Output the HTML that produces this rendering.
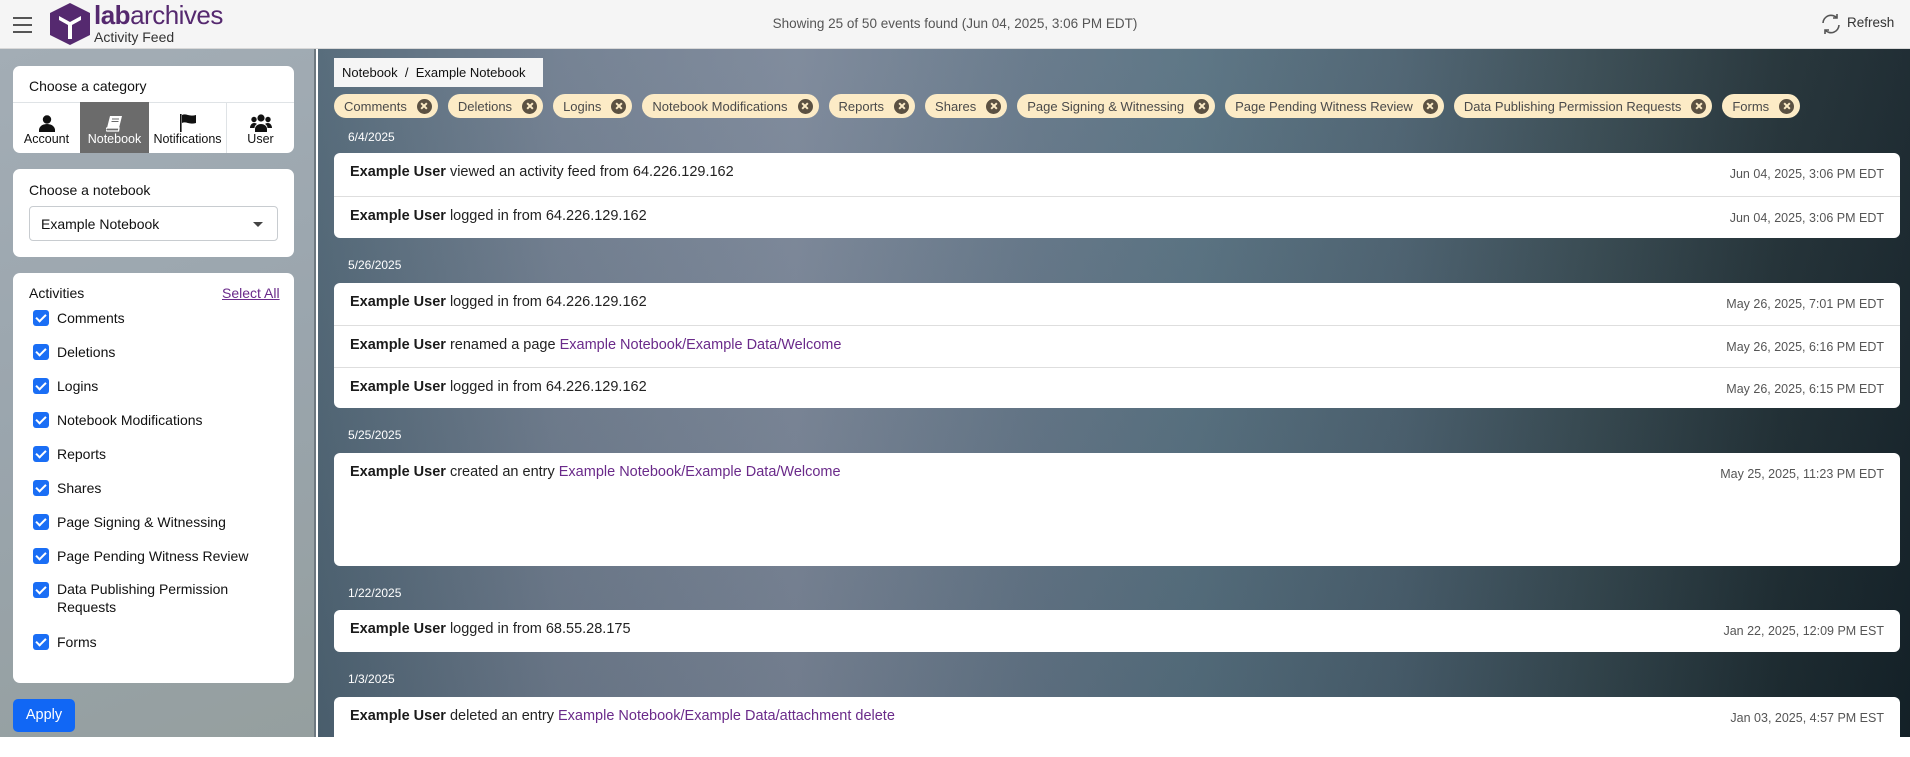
<!DOCTYPE html>
<html><head><meta charset="utf-8"><style>
*{box-sizing:border-box;margin:0;padding:0}
body{width:1910px;height:737px;overflow:hidden;font-family:"Liberation Sans",Arial,sans-serif;color:#222;position:relative;background:#fff}
.hdr{position:absolute;left:0;top:0;width:1910px;height:49px;background:#f5f5f5;border-bottom:1px solid #d8d8d8}
.side{position:absolute;left:0;top:49px;width:316px;height:688px;background:linear-gradient(160deg,#a3adb5 0%,#9aa5ad 50%,#959f9f 100%);border-right:2px solid #6d7880}
.main{position:absolute;left:318px;top:49px;width:1592px;height:688px;background:linear-gradient(90deg,#4f6575 0%,#6e7c8e 15%,#7a8698 30%,#627587 45%,#567080 55%,#495f6e 68%,#34474f 80%,#1e2d33 92%,#15232a 100%)}
.main:before{content:"";position:absolute;inset:0;background:linear-gradient(180deg,rgba(255,255,255,0.05),rgba(0,0,0,0.08))}
.card{position:absolute;background:#fff;border-radius:7px}
.tab{position:absolute;top:102px;height:51px;text-align:center;font-size:12.5px;color:#111}
.tab .ic{height:22px;margin-top:8px;display:flex;justify-content:center;align-items:flex-end}
.cb{position:absolute;left:33px;width:16px;height:16px;background:#1a6ef5;border-radius:3px}
.cb:after{content:"";position:absolute;left:5px;top:2px;width:4px;height:8px;border:solid #fff;border-width:0 2px 2px 0;transform:rotate(45deg)}
.lbl{position:absolute;left:57px;font-size:14px;color:#111}
.chips{position:absolute;left:334px;top:94px;display:flex;gap:10px}
.chip{height:24px;border-radius:12px;background:#fcebc6;display:flex;align-items:center;padding:0 6px 0 10px;font-size:13px;color:#4a4a4a;white-space:nowrap}
.x{width:15px;height:15px;border-radius:50%;background:#5b5142;margin-left:10px;position:relative}
.x:before,.x:after{content:"";position:absolute;left:6.5px;top:3.5px;width:2px;height:8px;background:#fcebc6;transform:rotate(45deg)}
.x:after{transform:rotate(-45deg)}
.date{position:absolute;left:348px;font-size:12px;color:#fff}
.ev{position:absolute;left:334px;width:1566px;background:#fff;border-radius:6px;overflow:hidden}
.row{position:relative;height:42px;border-top:1px solid #dedede;font-size:14.5px;color:#222;padding:11px 0 0 16px}
.row:first-child{border-top:none}
.row b{font-weight:bold;color:#1a1a1a}
.row .t{position:absolute;right:16px;top:14px;font-size:12.5px;color:#555}
.lk{color:#6a2a8a}
</style></head><body>
<div class="hdr">
 <div style="position:absolute;left:13px;top:17px;width:19px">
  <div style="height:2px;background:#555;margin-bottom:5px"></div><div style="height:2px;background:#555;margin-bottom:5px"></div><div style="height:2px;background:#555"></div></div>
 <svg style="position:absolute;left:50px;top:3px" width="40" height="42" viewBox="0 0 40 42">
  <polygon points="20,0 40,10 40,32 20,42 0,32 0,10" fill="#55296f"/>
  <polygon points="9,13 20,19 31,13 31,17 22,22 22,36 18,36 18,22 9,17" fill="#fff"/>
 </svg>
 <div style="position:absolute;left:94px;top:0px;font-size:26px;color:#55296f;letter-spacing:-0.5px"><b>lab</b>archives</div>
 <div style="position:absolute;left:94px;top:29px;font-size:14px;color:#333">Activity Feed</div>
 <div style="position:absolute;left:0;width:1910px;top:16px;text-align:center;font-size:13.5px;color:#555">Showing 25 of 50 events found (Jun 04, 2025, 3:06 PM EDT)</div>
 <svg style="position:absolute;left:1820px;top:13px" width="22" height="22" viewBox="0 0 22 22" fill="none" stroke="#555" stroke-width="1.6"><path d="M3 10a8 8 0 0 1 14-5"/><path d="M17 1v4h-4"/><path d="M19 12a8 8 0 0 1-14 5"/><path d="M5 21v-4h4"/></svg>
 <div style="position:absolute;left:1847px;top:15px;font-size:13.5px;color:#333">Refresh</div>
</div>
<div class="side">
</div>
<div class="card" style="left:13px;top:66px;width:281px;height:87px"></div>
<div style="position:absolute;left:29px;top:78px;font-size:14px;color:#111">Choose a category</div>
<div style="position:absolute;left:13px;top:102px;width:281px;height:1px;background:#dfe3e6"></div>
<div class="tab" style="left:13px;width:67px"><div class="ic"><svg width="16" height="17" viewBox="0 0 16 17"><circle cx="8" cy="4.5" r="4.2" fill="#111"/><path d="M0 17v-2c0-3 3-6 8-6s8 3 8 6v2z" fill="#111"/></svg></div>Account</div>
<div class="tab" style="left:80px;width:69px;background:#6b6b6b;color:#fff"><div class="ic"><svg width="17" height="17" viewBox="0 0 17 17"><path d="M4 1h12l-3 12H1z" fill="#fff"/><path d="M1 13h12l-.5 3H1.5a1.5 1.5 0 0 1-.5-3z" fill="none" stroke="#fff" stroke-width="1.3"/><path d="M6 4h7M5.5 6.5h7" stroke="#6b6b6b" stroke-width="1"/></svg></div>Notebook</div>
<div class="tab" style="left:149px;width:78px;border-right:1px solid #dfe3e6"><div class="ic"><svg width="18" height="18" viewBox="0 0 18 18"><rect x="1" y="0" width="1.6" height="18" fill="#111"/><path d="M3 1c4-2 7 2 14 0v8c-7 2-10-2-14 0z" fill="#111"/></svg></div>Notifications</div>
<div class="tab" style="left:227px;width:67px"><div class="ic"><svg width="22" height="18" viewBox="0 0 22 18"><circle cx="11" cy="4" r="3.6" fill="#111"/><circle cx="4" cy="5.5" r="2.7" fill="#111"/><circle cx="18" cy="5.5" r="2.7" fill="#111"/><path d="M5 18v-3c0-3 3-5 6-5s6 2 6 5v3z" fill="#111"/><path d="M0 14c0-3 2-5 4-5s3 1 3 1c-2 1-2.5 3-2.5 4z" fill="#111"/><path d="M22 14c0-3-2-5-4-5s-3 1-3 1c2 1 2.5 3 2.5 4z" fill="#111"/></svg></div>User</div>

<div class="card" style="left:13px;top:169px;width:281px;height:88px"></div>
<div style="position:absolute;left:29px;top:182px;font-size:14px;color:#111">Choose a notebook</div>
<div style="position:absolute;left:29px;top:206px;width:249px;height:35px;border:1px solid #c8ccd0;border-radius:4px;background:#fff;font-size:14px;padding:9px 0 0 11px;color:#111">Example Notebook
 <div style="position:absolute;right:14px;top:15px;width:0;height:0;border-left:5px solid transparent;border-right:5px solid transparent;border-top:5px solid #444"></div></div>

<div class="card" style="left:13px;top:273px;width:281px;height:410px"></div>
<div style="position:absolute;left:29px;top:285px;font-size:14px;color:#111">Activities</div>
<div style="position:absolute;left:222px;top:285px;font-size:14px;color:#6a2a8a;text-decoration:underline">Select All</div>
<div class="cb" style="top:310px"></div><div class="lbl" style="top:310px">Comments</div>
<div class="cb" style="top:344px"></div><div class="lbl" style="top:344px">Deletions</div>
<div class="cb" style="top:378px"></div><div class="lbl" style="top:378px">Logins</div>
<div class="cb" style="top:412px"></div><div class="lbl" style="top:412px">Notebook Modifications</div>
<div class="cb" style="top:446px"></div><div class="lbl" style="top:446px">Reports</div>
<div class="cb" style="top:480px"></div><div class="lbl" style="top:480px">Shares</div>
<div class="cb" style="top:514px"></div><div class="lbl" style="top:514px">Page Signing &amp; Witnessing</div>
<div class="cb" style="top:548px"></div><div class="lbl" style="top:548px">Page Pending Witness Review</div>
<div class="cb" style="top:582px"></div><div class="lbl" style="line-height:18px;top:580px">Data Publishing Permission<br>Requests</div>
<div class="cb" style="top:634px"></div><div class="lbl" style="top:634px">Forms</div>
<div style="position:absolute;left:13px;top:699px;width:62px;height:33px;background:#1167f5;border-radius:5px;color:#fff;font-size:14.5px;text-align:center;line-height:33px">Apply</div>

<div class="main"></div>
<div style="position:absolute;left:334px;top:58px;width:209px;height:29px;background:#f5f5f5;font-size:13px;color:#111;padding:7px 0 0 8px">Notebook &nbsp;/&nbsp; Example Notebook</div>
<div class="chips">
 <div class="chip">Comments<span class="x"></span></div>
 <div class="chip">Deletions<span class="x"></span></div>
 <div class="chip">Logins<span class="x"></span></div>
 <div class="chip">Notebook Modifications<span class="x"></span></div>
 <div class="chip">Reports<span class="x"></span></div>
 <div class="chip">Shares<span class="x"></span></div>
 <div class="chip">Page Signing &amp; Witnessing<span class="x"></span></div>
 <div class="chip">Page Pending Witness Review<span class="x"></span></div>
 <div class="chip">Data Publishing Permission Requests<span class="x"></span></div>
 <div class="chip">Forms<span class="x"></span></div>
</div>
<div class="date" style="top:130px">6/4/2025</div>
<div class="ev" style="top:153px;height:85px">
 <div class="row" style="height:43px"><b>Example User</b> viewed an activity feed from 64.226.129.162<span class="t">Jun 04, 2025, 3:06 PM EDT</span></div>
 <div class="row"><b>Example User</b> logged in from 64.226.129.162<span class="t">Jun 04, 2025, 3:06 PM EDT</span></div>
</div>
<div class="date" style="top:258px">5/26/2025</div>
<div class="ev" style="top:283px;height:125px">
 <div class="row"><b>Example User</b> logged in from 64.226.129.162<span class="t">May 26, 2025, 7:01 PM EDT</span></div>
 <div class="row"><b>Example User</b> renamed a page <span class="lk">Example Notebook/Example Data/Welcome</span><span class="t">May 26, 2025, 6:16 PM EDT</span></div>
 <div class="row"><b>Example User</b> logged in from 64.226.129.162<span class="t">May 26, 2025, 6:15 PM EDT</span></div>
</div>
<div class="date" style="top:428px">5/25/2025</div>
<div class="ev" style="top:453px;height:113px">
 <div class="row" style="height:113px"><b>Example User</b> created an entry <span class="lk">Example Notebook/Example Data/Welcome</span><span class="t">May 25, 2025, 11:23 PM EDT</span></div>
</div>
<div class="date" style="top:586px">1/22/2025</div>
<div class="ev" style="top:610px;height:42px">
 <div class="row"><b>Example User</b> logged in from 68.55.28.175<span class="t">Jan 22, 2025, 12:09 PM EST</span></div>
</div>
<div class="date" style="top:672px">1/3/2025</div>
<div class="ev" style="top:697px;height:60px">
 <div class="row"><b>Example User</b> deleted an entry <span class="lk">Example Notebook/Example Data/attachment delete</span><span class="t">Jan 03, 2025, 4:57 PM EST</span></div>
</div>
</body></html>
